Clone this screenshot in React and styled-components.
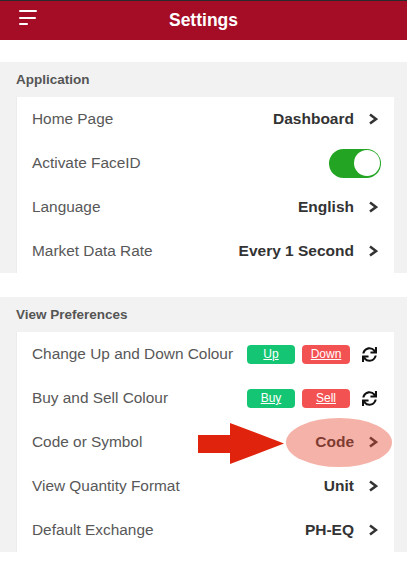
import React from "react";
import styled, { createGlobalStyle } from "styled-components";
import { FaSync } from "react-icons/fa";

const Global = createGlobalStyle`
  html, body { margin: 0; padding: 0; background: #fff; }
  body { font-family: "Liberation Sans", Arial, sans-serif; }
  * { box-sizing: border-box; }
`;

const Page = styled.div`
  width: 407px;
  min-height: 563px;
  background: #fff;
  display: flex;
  flex-direction: column;
`;

const Header = styled.header`
  height: 40px;
  border-top: 1px solid #2a2a2a;
  background: #a50c25;
  display: flex;
  align-items: center;
  justify-content: center;
  position: relative;
`;

const Title = styled.h1`
  margin: 0;
  color: #fff;
  font-size: 17.5px;
  font-weight: 700;
  line-height: 1;
`;

const MenuButton = styled.div`
  position: absolute;
  left: 19px;
  top: 9px;
  width: 18px;
  display: flex;
  flex-direction: column;
  gap: 4.5px;
`;

const MenuLine = styled.span`
  display: block;
  height: 2px;
  width: ${(p) => p.$w}px;
  background: #fff;
  border-radius: 1px;
`;

const Spacer = styled.div`
  height: ${(p) => p.$h}px;
`;

const Section = styled.section`
  background: #f2f2f2;
  display: flex;
  flex-direction: column;
`;

const SectionTitle = styled.div`
  padding: 10px 16px 9px;
  font-size: 13.5px;
  line-height: 16px;
  font-weight: 700;
  color: #555;
`;

const Card = styled.div`
  margin: 0 13px 0 16px;
  background: #fff;
  border-left: 1px solid #ececec;
  display: flex;
  flex-direction: column;
`;

const Row = styled.div`
  height: 44px;
  padding: 0 16px 0 15px;
  display: flex;
  align-items: center;
  position: relative;
`;

const Label = styled.span`
  flex: 1;
  font-size: 15.4px;
  color: #585858;
  white-space: nowrap;
`;

const Value = styled.span`
  font-size: 15.5px;
  font-weight: 700;
  color: #333;
  white-space: nowrap;
`;

const Chevron = styled.svg`
  width: 10px;
  height: 12px;
  margin-left: 14px;
  flex: none;
`;

const Toggle = styled.div`
  width: 52px;
  height: 29px;
  margin-right: -3px;
  border-radius: 15px;
  background: #23a523;
  padding: 1.5px;
  display: flex;
  justify-content: flex-end;
`;

const Knob = styled.div`
  width: 26px;
  height: 26px;
  border-radius: 50%;
  background: #fff;
`;

const Pill = styled.span`
  width: 48px;
  height: 19px;
  border-radius: 4px;
  background: ${(p) => (p.$tone === "up" ? "#14c673" : "#f35252")};
  color: #fff;
  font-size: 12px;
  text-decoration: underline;
  display: flex;
  align-items: center;
  justify-content: center;
  margin-left: ${(p) => p.$ml}px;
`;

const SyncIcon = styled(FaSync)`
  width: 15px;
  height: 15px;
  margin-left: 12px;
  margin-right: 1px;
  color: #111;
  flex: none;
`;

const Highlight = styled.div`
  position: absolute;
  right: 2px;
  top: -2px;
  width: 106px;
  height: 49px;
  border-radius: 50%;
  background: rgba(232, 72, 48, 0.42);
  pointer-events: none;
`;

const Arrow = styled.svg`
  position: absolute;
  left: 181px;
  top: 3px;
  width: 86px;
  height: 41px;
  pointer-events: none;
`;

const ChevronIcon = () => (
  <Chevron viewBox="0 0 10 12">
    <polyline
      points="2,1.5 8,6 2,10.5"
      fill="none"
      stroke="#333"
      strokeWidth="2.6"
      strokeLinejoin="miter"
    />
  </Chevron>
);

const NavRow = ({ label, value, children }) => (
  <Row>
    <Label>{label}</Label>
    <Value>{value}</Value>
    <ChevronIcon />
    {children}
  </Row>
);

export default function App() {
  return (
    <Page>
      <Global />
      <Header>
        <MenuButton>
          <MenuLine $w={18} />
          <MenuLine $w={17} />
          <MenuLine $w={9} />
        </MenuButton>
        <Title>Settings</Title>
      </Header>
      <Spacer $h={22} />
      <Section>
        <SectionTitle>Application</SectionTitle>
        <Card>
          <NavRow label="Home Page" value="Dashboard" />
          <Row>
            <Label>Activate FaceID</Label>
            <Toggle>
              <Knob />
            </Toggle>
          </Row>
          <NavRow label="Language" value="English" />
          <NavRow label="Market Data Rate" value="Every 1 Second" />
        </Card>
      </Section>
      <Spacer $h={24} />
      <Section>
        <SectionTitle>View Preferences</SectionTitle>
        <Card>
          <Row>
            <Label>Change Up and Down Colour</Label>
            <Pill $tone="up" $ml={0}>Up</Pill>
            <Pill $tone="down" $ml={7}>Down</Pill>
            <SyncIcon />
          </Row>
          <Row>
            <Label>Buy and Sell Colour</Label>
            <Pill $tone="up" $ml={0}>Buy</Pill>
            <Pill $tone="down" $ml={7}>Sell</Pill>
            <SyncIcon />
          </Row>
          <NavRow label="Code or Symbol" value="Code">
            <Highlight />
            <Arrow viewBox="0 0 86 41">
              <polygon
                points="0,12 32,12 32,0 86,20.5 32,41 32,30 0,30"
                fill="#e0230c"
              />
            </Arrow>
          </NavRow>
          <NavRow label="View Quantity Format" value="Unit" />
          <NavRow label="Default Exchange" value="PH-EQ" />
        </Card>
      </Section>
    </Page>
  );
}
